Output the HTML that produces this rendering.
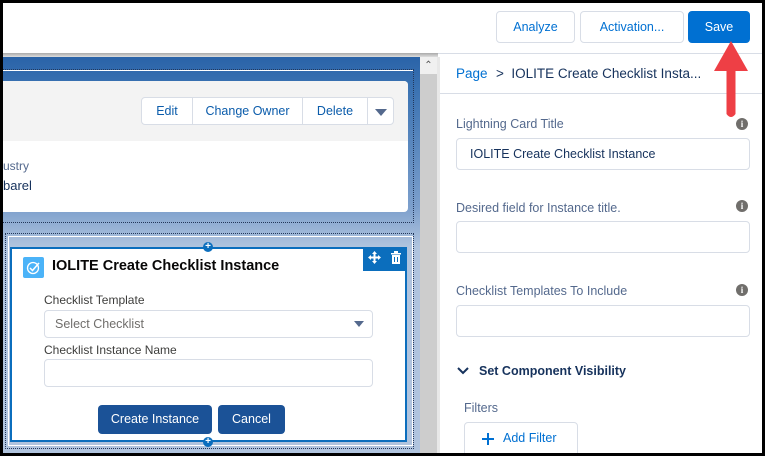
<!DOCTYPE html>
<html><head><style>
*{box-sizing:border-box;margin:0;padding:0}
html,body{width:765px;height:456px;overflow:hidden}
body{background:#000;font-family:"Liberation Sans",sans-serif;position:relative}
.a{position:absolute}
.btn{position:absolute;border:1px solid #d8dde6;border-radius:4px;background:#fff;color:#0070d2;font-size:12.5px;text-align:center;line-height:30px}
.lbl{position:absolute;font-size:12.5px;color:#54698d}
.inp{position:absolute;border:1px solid #d8dde6;border-radius:4px;background:#fff;height:32px}
.info{position:absolute;width:12px;height:12px;border-radius:50%;background:#706e6b;color:#fff;font-size:9px;font-weight:bold;text-align:center;line-height:12px;font-family:"Liberation Serif",serif}
</style></head><body>
<div class="a" style="left:3px;top:3px;width:759px;height:450px;background:#fff"></div>
<div class="btn" style="left:496px;top:11px;width:79px;height:32px">Analyze</div>
<div class="btn" style="left:580px;top:11px;width:104px;height:32px">Activation...</div>
<div class="btn" style="left:688px;top:11px;width:62px;height:32px;background:#0070d2;border-color:#0070d2;color:#fff">Save</div>
<div class="a" style="left:3px;top:53px;width:435px;height:4px;background:linear-gradient(#aaa,#ddd)"></div>
<div class="a" style="left:438px;top:53px;width:324px;height:1px;background:#d8dde6"></div>
<div class="a" style="left:3px;top:57px;width:417px;height:396px;background:linear-gradient(#2a63a8 0px,#3a72b2 30px,#7c9fcc 150px,#b0c4de 190px,#b0c4de 396px)"></div>
<div class="a" style="left:3px;top:69px;width:411px;height:154px;border:1px dotted #23375a;border-left:none"></div>
<div class="a" style="left:3px;top:70px;width:410px;height:1px;background:#fff"></div>
<div class="a" style="left:3px;top:81px;width:405px;height:131px;background:#fff;border-radius:0 4px 4px 0"></div>
<div class="a" style="left:3px;top:81px;width:405px;height:60px;background:#f3f3f3;border-radius:0 4px 0 0"></div>
<div class="a" style="left:141px;top:97px;width:253px;height:28px;background:#fff;border:1px solid #d8dde6;border-radius:4px;font-size:12.5px;color:#0b5cab;line-height:26px">
<span class="a" style="left:0;width:50px;text-align:center">Edit</span>
<span class="a" style="left:50px;width:1px;height:26px;background:#d8dde6"></span>
<span class="a" style="left:51px;width:109px;text-align:center">Change Owner</span>
<span class="a" style="left:160px;width:1px;height:26px;background:#d8dde6"></span>
<span class="a" style="left:161px;width:64px;text-align:center">Delete</span>
<span class="a" style="left:225px;width:1px;height:26px;background:#d8dde6"></span>
<span class="a" style="left:233px;top:11px;width:0;height:0;border-left:6px solid transparent;border-right:6px solid transparent;border-top:7px solid #54698d"></span>
</div>
<div class="a" style="left:3px;top:159px;font-size:12px;color:#54698d">ustry</div>
<div class="a" style="left:3px;top:178px;font-size:13px;color:#16325c">barel</div>
<div class="a" style="left:5px;top:233px;width:409px;height:216px;border:1px dotted #23375a"></div>
<div class="a" style="left:8px;top:236px;width:405px;height:210px;border:1px solid #fff"></div>
<div class="a" style="left:10px;top:247px;width:397px;height:195px;background:#fff;border:2px solid #0b6ebd"></div>
<div class="a" style="left:203px;top:242px;width:10px;height:10px;border-radius:50%;background:#0b6ebd;color:#fff;font-size:10px;line-height:10px;text-align:center;font-weight:bold">+</div>
<div class="a" style="left:203px;top:437px;width:10px;height:10px;border-radius:50%;background:#0b6ebd;color:#fff;font-size:10px;line-height:10px;text-align:center;font-weight:bold">+</div>
<div class="a" style="left:363px;top:247px;width:44px;height:24px;background:#0b6ebd"></div>
<svg class="a" style="left:368px;top:251px" width="13" height="13" viewBox="0 0 13 13"><path d="M6.5 0 L9 3 H7.5 V5.5 H10 V4 L13 6.5 L10 9 V7.5 H7.5 V10 H9 L6.5 13 L4 10 H5.5 V7.5 H3 V9 L0 6.5 L3 4 V5.5 H5.5 V3 H4 Z" fill="#fff"/></svg>
<svg class="a" style="left:391px;top:251px" width="10" height="13" viewBox="0 0 10 13"><rect x="0" y="2" width="10" height="1.5" fill="#fff"/><rect x="3" y="0" width="4" height="2" fill="#fff"/><path d="M1 4 H9 V13 H1 Z M3 6 V11 H4 V6 Z M6 6 V11 H7 V6 Z" fill="#fff" fill-rule="evenodd"/></svg>
<div class="a" style="left:23px;top:257px;width:21px;height:21px;background:#4bb3f8;border-radius:2px"></div>
<svg class="a" style="left:25px;top:259px" width="17" height="17" viewBox="0 0 17 17"><circle cx="8" cy="9" r="5.5" fill="none" stroke="#fff" stroke-width="1.3"/><path d="M5 9 L7.5 11.5 L14 4" fill="none" stroke="#fff" stroke-width="1.5"/></svg>
<div class="a" style="left:52px;top:258px;font-size:14.5px;font-weight:bold;color:#080707">IOLITE Create Checklist Instance</div>
<div class="a" style="left:44px;top:293px;font-size:12px;color:#3e3e3c">Checklist Template</div>
<div class="inp" style="left:44px;top:310px;width:329px;height:28px"></div>
<div class="a" style="left:55px;top:317px;font-size:12.5px;color:#706e6b">Select Checklist</div>
<div class="a" style="left:354px;top:321px;border-left:5px solid transparent;border-right:5px solid transparent;border-top:6px solid #54698d"></div>
<div class="a" style="left:44px;top:343px;font-size:12px;color:#3e3e3c">Checklist Instance Name</div>
<div class="inp" style="left:44px;top:359px;width:329px;height:28px"></div>
<div class="a" style="left:98px;top:405px;width:114px;height:29px;background:#1b5297;border-radius:4px;color:#fff;font-size:12.5px;text-align:center;line-height:29px">Create Instance</div>
<div class="a" style="left:218px;top:405px;width:67px;height:29px;background:#1b5297;border-radius:4px;color:#fff;font-size:12.5px;text-align:center;line-height:29px">Cancel</div>
<div class="a" style="left:420px;top:57px;width:17px;height:396px;background:#cdcdcd"></div>
<div class="a" style="left:420px;top:57px;width:17px;height:17px;background:#f0f0f0;color:#555;font-size:10px;text-align:center;line-height:17px">&#8963;</div>
<div class="a" style="left:437px;top:57px;width:3px;height:396px;background:#e8e8e8"></div>
<div class="a" style="left:456px;top:66px;font-size:13.5px;color:#0070d2">Page</div>
<div class="a" style="left:496px;top:66px;font-size:13.5px;color:#16325c">&gt;&nbsp; IOLITE Create Checklist Insta...</div>
<div class="a" style="left:440px;top:93px;width:322px;height:1px;background:#d8dde6"></div>
<div class="lbl" style="left:456px;top:117px">Lightning Card Title</div>
<div class="info" style="left:736px;top:118px">i</div>
<div class="inp" style="left:456px;top:138px;width:294px;height:32px;font-size:12.5px;color:#16325c;line-height:30px;padding-left:13px">IOLITE Create Checklist Instance</div>
<div class="lbl" style="left:456px;top:201px">Desired field for Instance title.</div>
<div class="info" style="left:736px;top:200px">i</div>
<div class="inp" style="left:456px;top:221px;width:294px"></div>
<div class="lbl" style="left:456px;top:284px">Checklist Templates To Include</div>
<div class="info" style="left:736px;top:284px">i</div>
<div class="inp" style="left:456px;top:305px;width:294px"></div>
<svg class="a" style="left:457px;top:367px" width="12" height="8" viewBox="0 0 12 8"><path d="M1 1 L6 6 L11 1" fill="none" stroke="#16325c" stroke-width="2"/></svg>
<div class="a" style="left:479px;top:364px;font-size:12.5px;font-weight:bold;color:#16325c">Set Component Visibility</div>
<div class="lbl" style="left:464px;top:401px">Filters</div>
<div class="a" style="left:464px;top:422px;width:114px;height:40px;border:1px solid #d8dde6;border-radius:4px;background:#fff"></div>
<svg class="a" style="left:481px;top:432px" width="14" height="14" viewBox="0 0 14 14"><path d="M7 1 V13 M1 7 H13" stroke="#0070d2" stroke-width="2"/></svg>
<div class="a" style="left:503px;top:431px;font-size:12.5px;color:#0070d2">Add Filter</div>
<svg class="a" style="left:712px;top:40px" width="38" height="82" viewBox="0 0 38 82"><path d="M19 1 L36 31 H23.5 V74 Q19 80 14.5 74 V31 H2 Z" fill="#ee3f45"/></svg>
<div class="a" style="left:0;top:453px;width:765px;height:3px;background:#000"></div>
<div class="a" style="left:762px;top:0;width:3px;height:456px;background:#000"></div>
</body></html>
